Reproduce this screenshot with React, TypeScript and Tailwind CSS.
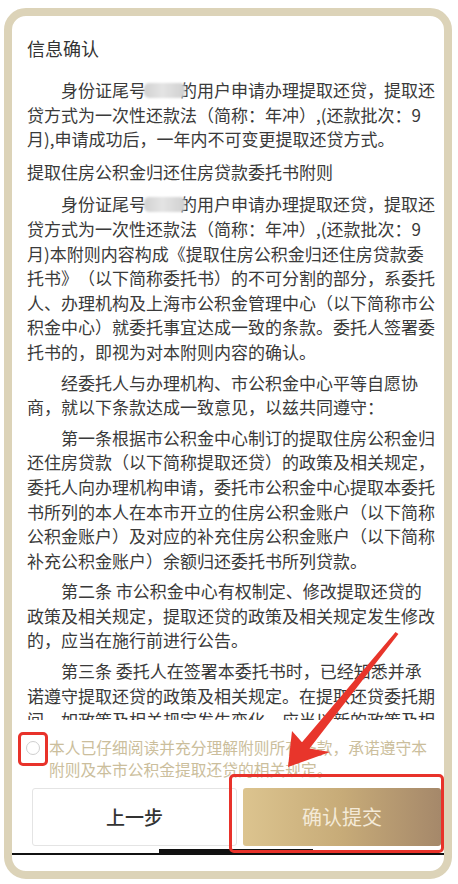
import React from "react";

function Redact() {
  return (
    <span className="relative inline-block w-[2em] h-[1em] align-[-2px]">
      <span className="absolute left-[-2px] right-[-5px] top-[1px] bottom-[1px] rounded-[5px] bg-[linear-gradient(90deg,#d2d2d2,#e4e4e4_45%,#d0d0d0)] blur-[1.2px]" />
    </span>
  );
}

function P({ children, indent = true, className = "" }: { children: React.ReactNode; indent?: boolean; className?: string }) {
  return <p className={`${indent ? "indent-[2em]" : ""} mb-[6px] ${className}`}>{children}</p>;
}

export default function App() {
  return (
    <div className="relative w-[458px] h-[884px] overflow-hidden bg-white font-['Noto_Sans_CJK_SC',sans-serif] [text-spacing-trim:space-all]">
      <div className="ml-[4px] mt-[8px] w-[448px] h-[871px] rounded-[22px] border-[8px] border-[#dcd3b8] bg-white overflow-hidden flex flex-col">
        {/* scrolling text */}
        <div className="h-[704px] shrink-0 overflow-hidden pt-[20px] pl-[15px]">
          <div className="w-[410px] text-[17px] leading-[24.6px] text-[#3a3a3a]">
            <h1 className="text-[18px] leading-[24px] text-[#333] mb-[18px]">信息确认</h1>
            <P>
              身份证尾号<Redact />的用户申请办理提取还贷，提取还贷方式为一次性还款法（简称：年冲）,(还款批次：9月),申请成功后，一年内不可变更提取还贷方式。
            </P>
            <p className="mt-[8px] mb-[8px]">提取住房公积金归还住房贷款委托书附则</p>
            <P>
              身份证尾号<Redact />的用户申请办理提取还贷，提取还贷方式为一次性还款法（简称：年冲）,(还款批次：9月)本附则内容构成《提取住房公积金归还住房贷款委托书》（以下简称委托书）的不可分割的部分，系委托人、办理机构及上海市公积金管理中心（以下简称市公积金中心）就委托事宜达成一致的条款。委托人签署委托书的，即视为对本附则内容的确认。
            </P>
            <P>经委托人与办理机构、市公积金中心平等自愿协商，就以下条款达成一致意见，以兹共同遵守：</P>
            <P>
              第一条根据市公积金中心制订的提取住房公积金归还住房贷款（以下简称提取还贷）的政策及相关规定，委托人向办理机构申请，委托市公积金中心提取本委托书所列的本人在本市开立的住房公积金账户（以下简称公积金账户）及对应的补充住房公积金账户（以下简称补充公积金账户）余额归还委托书所列贷款。
            </P>
            <P>第二条 市公积金中心有权制定、修改提取还贷的政策及相关规定，提取还贷的政策及相关规定发生修改的，应当在施行前进行公告。</P>
            <P>
              第三条 委托人在签署本委托书时，已经知悉并承诺遵守提取还贷的政策及相关规定。在提取还贷委托期间，如政策及相关规定发生变化，应当以新的政策及相关规定为准。
            </P>
          </div>
        </div>

        {/* consent */}
        <div className="mt-[17px] flex items-start pl-[14px]">
          <div className="relative mt-[4px] h-[14px] w-[14px] shrink-0 rounded-full border border-[#cfcfcf] bg-white">
            <div className="absolute left-[-9px] top-[-10px] h-[34px] w-[30px] rounded-[5px] border-[3px] border-[#e8322a]" />
          </div>
          <p className="ml-[9px] w-[382px] text-[15.75px] leading-[22px] text-[#cbbe9c]">
            本人已仔细阅读并充分理解附则所有条款，承诺遵守本附则及本市公积金提取还贷的相关规定。
          </p>
        </div>

        {/* buttons */}
        <div className="mt-[7px] flex h-[58px] pl-[20px] pr-[3px] gap-[6px]">
          <button className="w-[205px] h-full rounded-[3px] border border-[#e4e4e4] bg-white text-[19px] font-medium text-[#333]">
            上一步
          </button>
          <div className="relative w-[198px] h-full">
            <button className="w-full h-full rounded-[3px] bg-[linear-gradient(90deg,#dcc48f,#c7ab78_50%,#a5886a)] text-[20px] text-[#f4ead8]">
              确认提交
            </button>
            <div className="absolute left-[-14px] right-[-3px] top-[-14px] bottom-[-7px] rounded-[5px] border-[3px] border-[#e8322a]" />
          </div>
        </div>

        {/* bottom bar */}
        <div className="mt-[2px] flex items-end h-[7px]">
          <div className="h-[2px] w-[147px] bg-[#111]" />
          <div className="h-[6px] w-[154px] bg-[#111]" />
          <div className="h-[2px] flex-1 bg-[#111]" />
        </div>
      </div>

      {/* annotation arrow */}
      <svg className="pointer-events-none absolute left-0 top-0" width="458" height="884" viewBox="0 0 458 884">
        <polygon
          points="398.4,634 309.5,748.5 330,752 288,767 292,731 302,742.3 395.6,632"
          fill="#e8352b"
        />
      </svg>
    </div>
  );
}
